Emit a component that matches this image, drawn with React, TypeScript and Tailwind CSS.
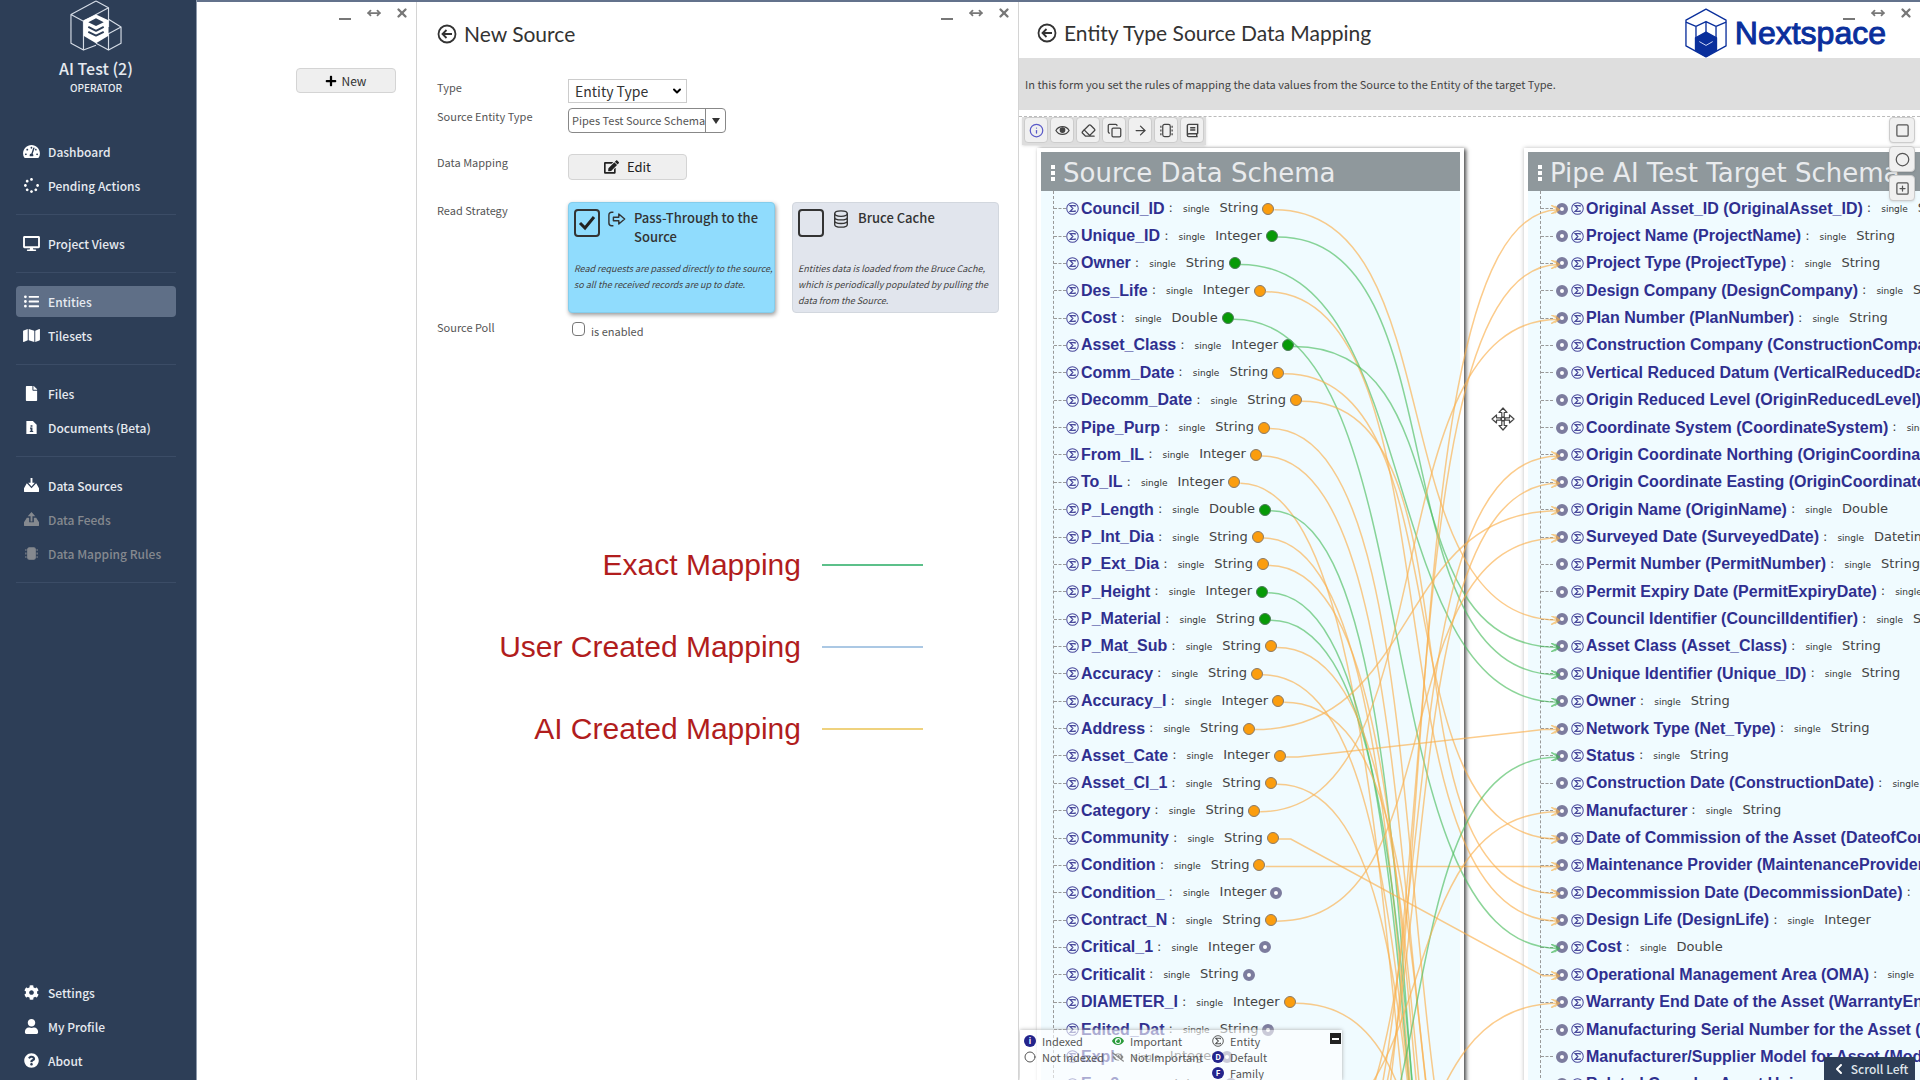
import React, { useLayoutEffect, useRef, useState } from 'react';
import { clsx } from 'clsx';
import {
  FaCog,
  FaDesktop,
  FaEdit,
  FaEye,
  FaEyeSlash,
  FaFile,
  FaListUl,
  FaMap,
  FaPlus,
  FaQuestionCircle,
  FaSpinner,
  FaTachometerAlt,
  FaUser,
} from 'react-icons/fa';
import {
  ArrowRight,
  ChevronDown,
  ChevronLeft,
  Circle,
  Copy,
  Eraser,
  Info,
  MoveHorizontal,
  Square,
  SquarePlus,
  X,
} from 'lucide-react';

type IconProps = { className?: string };

const FileInfoIcon = ({ className }: IconProps) => (
  <svg viewBox="0 0 16 16" className={className} fill="currentColor">
    <path d="M2.5 1h7l4 4v10h-11z" />
    <path d="M7 5.5h2v1.6H7zM6.4 8h2.6v3.6h.8v1.2H6.2v-1.2H7V9.2h-.6z" className="fill-[#2d3e57]" />
  </svg>
);

const TrayDownIcon = ({ className }: IconProps) => (
  <svg viewBox="0 0 16 16" className={className} fill="currentColor">
    <path d="M7 0h2v5h2.5L8 9 4.500 5H7z" />
    <path d="M3 5.500 8 11l5-5.500 3 5.500v3a1 1 0 0 1-1 1H1a1 1 0 0 1-1-1v-3z" />
  </svg>
);

const TrayUpIcon = ({ className }: IconProps) => (
  <svg viewBox="0 0 16 16" className={className} fill="currentColor">
    <path d="M8 0l4 4.500H9V10H7V4.500H4z" />
    <path d="M3 6h2.500v5h5V6H13l3 5v3a1 1 0 0 1-1 1H1a1 1 0 0 1-1-1v-3z" />
  </svg>
);

const RulesIcon = ({ className }: IconProps) => (
  <svg viewBox="0 0 16 16" className={className} fill="currentColor" stroke="currentColor" strokeWidth="1.2">
    <rect x="4" y="2" width="8" height="12" rx="1.5" />
    <path d="M2 3.500V5M2 7v2M2 11v1.500M14 3.500V5M14 7v2M14 11v1.500" />
  </svg>
);

const RulesOutlineIcon = ({ className }: IconProps) => (
  <svg viewBox="0 0 16 16" className={className} fill="none" stroke="currentColor" strokeWidth="1.3">
    <rect x="4" y="1.5" width="8" height="13" rx="2" />
    <path d="M2 3v2M2 7v2M2 11v2M14 3v2M14 7v2M14 11v2" />
  </svg>
);

const EyeIcon = ({ className }: IconProps) => (
  <svg viewBox="0 0 16 16" className={className} fill="none" stroke="currentColor" strokeWidth="1.3">
    <path d="M1 8c3-5.500 11-5.500 14 0-3 5.500-11 5.500-14 0z" />
    <circle cx="8" cy="7.500" r="2.400" fill="currentColor" />
  </svg>
);

const BookIcon = ({ className }: IconProps) => (
  <svg viewBox="0 0 16 16" className={className} fill="none" stroke="currentColor" strokeWidth="1.5">
    <path d="M13.500 11.500V1.500H4a1.500 1.500 0 0 0-1.500 1.500v10A1.500 1.500 0 0 0 4 14.500h9.500M13.500 11.500H4A1.500 1.500 0 0 0 2.500 13M12.500 11.500v3M5.500 5h5.500M5.500 7.500h5.500" />
  </svg>
);

const CylinderIcon = ({ className }: IconProps) => (
  <svg viewBox="0 0 16 20" className={className} fill="none" stroke="currentColor" strokeWidth="1.5">
    <ellipse cx="8" cy="4" rx="7" ry="3" />
    <path d="M1 4v12c0 4 14 4 14 0V4M1 8c0 4 14 4 14 0M1 12c0 4 14 4 14 0" />
  </svg>
);

const BackIcon = ({ className }: IconProps) => (
  <svg viewBox="0 0 20 20" className={className} fill="none" stroke="currentColor" strokeWidth="1.8">
    <circle cx="10" cy="10" r="8.500" />
    <path d="M15 10H6M9.500 6 5.500 10l4 4" />
  </svg>
);

const PassIcon = ({ className }: IconProps) => (
  <svg viewBox="0 0 20 18" className={className} fill="none" stroke="currentColor" strokeWidth="1.6" strokeLinejoin="round">
    <path d="M6 1.500H4a3 3 0 0 0-3 3v9a3 3 0 0 0 3 3h2" />
    <path d="M12 3.500 18.500 9 12 14.500V11H6V7h6z" />
  </svg>
);

const SigmaIcon = ({ className }: IconProps) => (
  <svg viewBox="0 0 14 14" className={className} fill="none" stroke="currentColor">
    <circle cx="7" cy="7" r="6.200" strokeWidth="1.100" />
    <path d="M9.800 5V3.800H4.400L7.400 7l-3 3.200h5.400V9" strokeWidth="1.300" />
  </svg>
);

const MoveCursor = ({ className }: IconProps) => (
  <svg viewBox="0 0 24 24" className={className} fill="#fff" stroke="#444" strokeWidth="1.200" strokeLinejoin="round">
    <path d="M12 1 8 5.500h2.800V10h2.400V5.500H16zM12 23l-4-4.500h2.800V14h2.400v4.500H16zM1 12l4.500-4v2.800H10v2.400H5.500V16zM23 12l-4.500-4v2.800H14v2.400h4.500V16z" />
    <rect x="10.500" y="10.500" width="3" height="3" />
  </svg>
);

const OperatorLogo = () => (
  <svg viewBox="0 0 54 54" className="h-[52px] w-[54px]" fill="none" stroke="#d5dce6" strokeWidth="1.200" strokeLinejoin="round">
    <path d="M27 1 1 15v30l13 7 13-5M27 1l13 7v20M14 52V22L1 15M14 22 40 8M40 20l13 8v17l-13 7-13-7M40 52V35l13-7M27 27l13 8" />
    <path d="M27 15l13 6v16l-13 8-13-8V21z" fill="#fff" stroke="none" />
    <path d="M27 19l8 4-8 4-8-4z" fill="#2d3e57" stroke="none" />
    <path d="m19 28 8 4 8-4M19 33l8 4 8-4" stroke="#2d3e57" strokeWidth="2" />
  </svg>
);

const NextspaceLogo = () => (
  <div className="flex items-center gap-2 text-[#0a2f9c]">
    <svg viewBox="0 0 44 52" className="h-[52px] w-[42px]" fill="none" stroke="currentColor" strokeWidth="1.400" strokeLinejoin="round">
      <path d="M22 1 43 12.500v27L22 51 1 39.500v-27z" />
      <path d="M1 14.500 11.500 19v13M11.500 19 22 14l10.500 5v13M32.500 19 43 14.500M22 14v12" />
      <path d="m22 25 11 6v13l-11 6.500L11 44V31z" fill="currentColor" />
      <path d="m15 35 7 4 7-4" stroke="#d7defa" strokeWidth="1" />
    </svg>
    <span className="font-['Liberation_Sans',sans-serif] text-[32px] leading-9 [-webkit-text-stroke:1px_#0a2f9c]">Nextspace</span>
  </div>
);

const menuGroups = [
  [
    { name: 'Dashboard', icon: FaTachometerAlt },
    { name: 'Pending Actions', icon: FaSpinner },
  ],
  [{ name: 'Project Views', icon: FaDesktop }],
  [
    { name: 'Entities', icon: FaListUl, active: true },
    { name: 'Tilesets', icon: FaMap },
  ],
  [
    { name: 'Files', icon: FaFile },
    { name: 'Documents (Beta)', icon: FileInfoIcon },
  ],
  [
    { name: 'Data Sources', icon: TrayDownIcon },
    { name: 'Data Feeds', icon: TrayUpIcon, disabled: true },
    { name: 'Data Mapping Rules', icon: RulesIcon, disabled: true },
  ],
];

const footerItems = [
  { name: 'Settings', icon: FaCog },
  { name: 'My Profile', icon: FaUser },
  { name: 'About', icon: FaQuestionCircle },
];

type MenuItem = {
  name: string;
  icon: React.ComponentType<IconProps>;
  active?: boolean;
  disabled?: boolean;
};

const MenuLink = ({ item }: { item: MenuItem }) => (
  <a
    href="#"
    className={clsx(
      'flex h-[31px] items-center gap-2 rounded px-[7px] text-[12px] font-medium',
      item.active && 'bg-[#5f6f87]',
      item.disabled ? 'text-[#85898f]' : 'text-[#e6eaf0]'
    )}
  >
    <item.icon className={clsx('h-[15px] w-[17px] shrink-0', !item.disabled && 'text-white')} />
    <span>{item.name}</span>
  </a>
);

const Sidebar = () => (
  <aside className="flex w-[197px] shrink-0 flex-col border-r border-[#8d99ab] bg-[#2d3e57] pr-5 pb-1 pl-4">
    <div className="flex flex-col items-center text-[#e6eaf0]">
      <OperatorLogo />
      <span className="mt-1 text-base leading-6 font-medium">AI Test (2)</span>
      <span className="text-[10px] leading-4 font-medium">OPERATOR</span>
    </div>
    <nav className="mt-[40px]">
      {menuGroups.map((group) => (
        <div key={group[0].name} className="mb-[13px] flex flex-col gap-[3px] border-b border-[#3b4c66] pb-[13px]">
          {group.map((item) => (
            <MenuLink key={item.name} item={item} />
          ))}
        </div>
      ))}
    </nav>
    <nav className="mt-auto flex flex-col gap-[3px]">
      {footerItems.map((item) => (
        <MenuLink key={item.name} item={item} />
      ))}
    </nav>
  </aside>
);

const WindowControls = () => (
  <div className="absolute top-1 right-[7px] flex gap-[14px] text-[#777]">
    <button aria-label="Minimise" className="flex h-[14px] w-[14px] items-end">
      <span className="h-[2px] w-3 bg-current" />
    </button>
    <button aria-label="Resize">
      <MoveHorizontal className="h-[14px] w-[14px]" strokeWidth={3} />
    </button>
    <button aria-label="Close">
      <X className="h-[14px] w-[14px]" strokeWidth={4} />
    </button>
  </div>
);

const PanelTitle = ({ children }: { children: React.ReactNode }) => (
  <div className="flex items-center gap-[7px] text-[#333]">
    <button aria-label="Back">
      <BackIcon className="h-5 w-5" />
    </button>
    <h1 className="font-['Lato',sans-serif] text-[21px] leading-7">{children}</h1>
  </div>
);

const strategies = [
  {
    name: 'Pass-Through to the Source',
    icon: PassIcon,
    text: 'Read requests are passed directly to the source,\nso all the received records are up to date.',
    checked: true,
  },
  {
    name: 'Bruce Cache',
    icon: CylinderIcon,
    text: 'Entities data is loaded from the Bruce Cache,\nwhich is periodically populated by pulling the\ndata from the Source.',
    checked: false,
  },
];

const StrategyCard = ({ strategy }: { strategy: (typeof strategies)[number] }) => {
  const [checked, setChecked] = useState(strategy.checked);
  return (
    <label
      className={clsx(
        'flex h-[111px] w-[207px] flex-col justify-between rounded border pt-[5px] pb-[3px] pl-[5px]',
        checked ? 'border-[#84cdec] bg-[#90dcfd] shadow-[1px_2px_4px_#999]' : 'border-[#d2d7de] bg-[#e1e5ed]'
      )}
    >
      <span className="flex items-start gap-2 pr-1 text-[#333]">
        <span className="relative mt-px h-7 w-[26px] shrink-0">
          <input
            type="checkbox"
            checked={checked}
            onChange={(e) => setChecked(e.target.checked)}
            className="h-7 w-[26px] appearance-none rounded-sm border-2 border-[#333]"
          />
          {checked && (
            <svg viewBox="0 0 26 28" className="pointer-events-none absolute inset-0" fill="none" stroke="#222" strokeWidth="3">
              <path d="m6 14 5 5 9-11" />
            </svg>
          )}
        </span>
        <strategy.icon className="mt-[2px] h-[18px] w-[18px] shrink-0" />
        <span className="text-[13px] leading-[19px] font-medium">{strategy.name}</span>
      </span>
      <span className="h-12 text-[9px] leading-4 whitespace-pre text-[#444] italic">{strategy.text}</span>
    </label>
  );
};

const mappingKinds = [
  { name: 'Exact Mapping', line: 'bg-[#5cc08a]' },
  { name: 'User Created Mapping', line: 'bg-[#abc8e4]' },
  { name: 'AI Created Mapping', line: 'bg-[#efd27e]' },
];

const NewSourcePanel = () => (
  <section className="relative w-[602px] shrink-0 border-r border-[#d4d4d4] px-5 pt-[18px]">
    <WindowControls />
    <PanelTitle>New Source</PanelTitle>
    <form className="mt-[31px] grid grid-cols-[131px_1fr] text-[11px] text-[#555]">
      <label htmlFor="type" className="leading-4">Type</label>
      <div className="relative h-[29px] w-[119px]">
        <select id="type" className="h-6 w-full appearance-none border border-[#ccc] pl-[6px] text-sm leading-5 text-[#333]">
          <option>Entity Type</option>
        </select>
        <ChevronDown className="pointer-events-none absolute top-[6px] right-1 h-3 w-3 text-black" strokeWidth={4} />
      </div>
      <label htmlFor="entity-type" className="leading-4">Source Entity Type</label>
      <div className="mb-[21px] flex h-[25px] w-[158px] rounded-sm border border-[#888]">
        <input id="entity-type" defaultValue="Pipes Test Source Schema" className="w-full min-w-0 pl-[3px]" />
        <button type="button" aria-label="Open list" className="flex w-5 shrink-0 items-center justify-center border-l border-[#888]">
          <svg viewBox="0 0 8 6" className="h-[6px] w-2" fill="#333">
            <path d="M0 0h8L4 6z" />
          </svg>
        </button>
      </div>
      <span className="leading-4">Data Mapping</span>
      <button type="button" className="mb-[22px] flex h-[26px] w-[119px] items-center justify-center gap-2 rounded border border-[#d4d4d4] bg-[#efefef] text-[13px] text-[#222]">
        <FaEdit className="h-[14px] w-[15px]" />
        Edit
      </button>
      <span className="leading-4">Read Strategy</span>
      <div className="mb-[6px] flex gap-[17px]">
        {strategies.map((strategy) => (
          <StrategyCard key={strategy.name} strategy={strategy} />
        ))}
      </div>
      <span className="leading-4">Source Poll</span>
      <label className="flex items-center gap-[6px] pl-[4px]">
        <input type="checkbox" className="h-[14px] w-[13px] appearance-none rounded-sm border border-[#777]" />
        <span className="pt-1 leading-4">is enabled</span>
      </label>
    </form>
    <ul className="mt-[208px] flex flex-col gap-[46px] pr-[75px] font-['Liberation_Sans',sans-serif] text-[30px] leading-9 text-[#b11d1d]">
      {mappingKinds.map((kind) => (
        <li key={kind.name} className="flex items-center justify-end gap-[21px]">
          {kind.name}
          <span className={clsx('h-[2px] w-[101px]', kind.line)} />
        </li>
      ))}
    </ul>
  </section>
);

type Field = [name: string, type: string, color?: 'orange' | 'green'];

const sourceFields: Field[] = [
  ['Council_ID', 'String', 'orange'],
  ['Unique_ID', 'Integer', 'green'],
  ['Owner', 'String', 'green'],
  ['Des_Life', 'Integer', 'orange'],
  ['Cost', 'Double', 'green'],
  ['Asset_Class', 'Integer', 'green'],
  ['Comm_Date', 'String', 'orange'],
  ['Decomm_Date', 'String', 'orange'],
  ['Pipe_Purp', 'String', 'orange'],
  ['From_IL', 'Integer', 'orange'],
  ['To_IL', 'Integer', 'orange'],
  ['P_Length', 'Double', 'green'],
  ['P_Int_Dia', 'String', 'orange'],
  ['P_Ext_Dia', 'String', 'orange'],
  ['P_Height', 'Integer', 'green'],
  ['P_Material', 'String', 'green'],
  ['P_Mat_Sub', 'String', 'orange'],
  ['Accuracy', 'String', 'orange'],
  ['Accuracy_I', 'Integer', 'orange'],
  ['Address', 'String', 'orange'],
  ['Asset_Cate', 'Integer', 'orange'],
  ['Asset_CI_1', 'String', 'orange'],
  ['Category', 'String', 'orange'],
  ['Community', 'String', 'orange'],
  ['Condition', 'String', 'orange'],
  ['Condition_', 'Integer'],
  ['Contract_N', 'String', 'orange'],
  ['Critical_1', 'Integer'],
  ['Criticalit', 'String'],
  ['DIAMETER_I', 'Integer', 'orange'],
  ['Edited_Dat', 'String'],
  ['Expl', 'Integer'],
  ['Exp2', 'Integer'],
];

const targetFields: Field[] = [
  ['Original Asset_ID (OriginalAsset_ID)', 'String'],
  ['Project Name (ProjectName)', 'String'],
  ['Project Type (ProjectType)', 'String'],
  ['Design Company (DesignCompany)', 'String'],
  ['Plan Number (PlanNumber)', 'String'],
  ['Construction Company (ConstructionCompany)', 'String'],
  ['Vertical Reduced Datum (VerticalReducedDatum)', 'String'],
  ['Origin Reduced Level (OriginReducedLevel)', 'Double'],
  ['Coordinate System (CoordinateSystem)', 'String'],
  ['Origin Coordinate Northing (OriginCoordinateNorthing)', 'Double'],
  ['Origin Coordinate Easting (OriginCoordinateEasting)', 'Double'],
  ['Origin Name (OriginName)', 'Double'],
  ['Surveyed Date (SurveyedDate)', 'Datetime'],
  ['Permit Number (PermitNumber)', 'String'],
  ['Permit Expiry Date (PermitExpiryDate)', 'Datetime'],
  ['Council Identifier (CouncilIdentifier)', 'String'],
  ['Asset Class (Asset_Class)', 'String'],
  ['Unique Identifier (Unique_ID)', 'String'],
  ['Owner', 'String'],
  ['Network Type (Net_Type)', 'String'],
  ['Status', 'String'],
  ['Construction Date (ConstructionDate)', 'Datetime'],
  ['Manufacturer', 'String'],
  ['Date of Commission of the Asset (DateofCommission)', 'Datetime'],
  ['Maintenance Provider (MaintenanceProvider)', 'String'],
  ['Decommission Date (DecommissionDate)', 'Datetime'],
  ['Design Life (DesignLife)', 'Integer'],
  ['Cost', 'Double'],
  ['Operational Management Area (OMA)', 'String'],
  ['Warranty End Date of the Asset (WarrantyEndDate)', 'Datetime'],
  ['Manufacturing Serial Number for the Asset (ManufacturingSerial)', 'String'],
  ['Manufacturer/Supplier Model for Asset (ModelforAsset)', 'String'],
  ['Related Complex Asset Unique Identifier', 'String'],
];

// [source row, target row, color], rows past the end of a list sit below the fold
const links: [number, number, 'orange' | 'green'][] = [
  [0, 15, 'orange'],
  [1, 17, 'green'],
  [2, 18, 'green'],
  [3, 26, 'orange'],
  [4, 27, 'green'],
  [5, 16, 'green'],
  [6, 23, 'orange'],
  [7, 25, 'orange'],
  [8, 42, 'orange'],
  [9, 44, 'orange'],
  [10, 52, 'orange'],
  [11, 56, 'green'],
  [12, 53, 'orange'],
  [13, 49, 'orange'],
  [14, 54, 'green'],
  [15, 51, 'green'],
  [16, 47, 'orange'],
  [17, 48, 'orange'],
  [18, 43, 'orange'],
  [19, 11, 'orange'],
  [20, 19, 'orange'],
  [21, 50, 'orange'],
  [22, 4, 'orange'],
  [23, 28, 'orange'],
  [24, 24, 'orange'],
  [26, 12, 'orange'],
  [29, 43, 'orange'],
  [42, 0, 'orange'],
  [39, 2, 'orange'],
  [36, 9, 'orange'],
  [38, 10, 'orange'],
  [38, 20, 'green'],
  [34, 22, 'orange'],
  [40, 29, 'orange'],
  [36, 32, 'orange'],
];

const buildWire = (x0: number, y0: number, x1: number, y1: number) => {
  const dy = Math.abs(y1 - y0);
  if (dy < 150) return `M${x0} ${y0}H${x0 + 12}L${x1 - 16} ${y1}H${x1}`;
  const bend = Math.min(150 + dy * 0.08, 202);
  return `M${x0} ${y0}C${x0 + bend} ${y0} ${x1 - bend} ${y1} ${x1} ${y1}`;
};

const Port = ({ color, portRef }: { color?: string; portRef: (el: HTMLElement | null) => void }) => (
  <span
    ref={portRef}
    className={clsx(
      'h-3 w-3 shrink-0 rounded-full',
      color === 'orange' && 'border border-[#8a7a68] bg-[#fb9d0e]',
      color === 'green' && 'border border-[#4d7a58] bg-[#079a07]',
      !color && 'border-4 border-[#7c7c9e] bg-white'
    )}
  />
);

type SchemaProps = {
  title: string;
  fields: Field[];
  side: 'source' | 'target';
  ports: React.RefObject<(HTMLElement | null)[]>;
};

const SchemaCard = ({ title, fields, side, ports }: SchemaProps) => (
  <article
    className={clsx(
      'shrink-0 border-4 border-white bg-[#f0fbff]',
      side === 'source' ? 'w-[427px] shadow-[2px_1px_4px_#444]' : 'w-[640px] shadow-[0_0_4px_#bbb]'
    )}
  >
    <header className="flex h-[39px] items-center gap-2 bg-[#8f989c] pt-[2px] pl-[10px] text-[#e9ebed]">
      <span className="flex w-1 flex-col gap-[2px]">
        <span className="h-1 w-1 bg-white" />
        <span className="h-1 w-1 bg-white" />
        <span className="h-1 w-1 bg-white" />
      </span>
      <h2 className="font-['DejaVu_Sans',sans-serif] text-[26px] leading-8 whitespace-nowrap">{title}</h2>
    </header>
    <ul className="ml-3 grid h-[907px] auto-rows-fr border-l border-dashed border-[#999] pt-1">
      {fields.map(([name, type, color], i) => (
        <li key={name} className="flex items-center whitespace-nowrap">
          <span className={clsx('w-3 border-t border-dashed border-[#999]', side === 'target' && 'mr-[3px]')} />
          {side === 'target' && <Port portRef={(el) => { ports.current[i] = el; }} />}
          <SigmaIcon className={clsx('mr-[2px] h-[13px] w-[13px] text-[#4a4a9c]', side === 'target' && 'ml-[3px]')} />
          <span className="font-['Liberation_Sans',sans-serif] text-base leading-5 font-bold text-[#2f2f8f]">{name}</span>
          <span className="font-['DejaVu_Sans',sans-serif] text-[13px] leading-5 text-[#444]">
            <span className="ml-1">:</span>
            <span className="mx-[10px] text-[9px] text-[#333]">single</span>
            {type}
          </span>
          {side === 'source' && (
            <span className="ml-1 flex">
              <Port color={color} portRef={(el) => { ports.current[i] = el; }} />
            </span>
          )}
        </li>
      ))}
    </ul>
  </article>
);

const tools = [
  { name: 'Info', icon: Info, className: 'text-[#5a5ac8]' },
  { name: 'Show', icon: EyeIcon },
  { name: 'Erase', icon: Eraser },
  { name: 'Copy', icon: Copy },
  { name: 'Link', icon: ArrowRight },
  { name: 'Rules', icon: RulesOutlineIcon },
  { name: 'Log', icon: BookIcon },
];

const shapes = [
  { name: 'Square', icon: Square },
  { name: 'Circle', icon: Circle },
  { name: 'Expand', icon: SquarePlus },
];

const Badge = ({ children }: { children: React.ReactNode }) => (
  <span className="flex h-3 w-3 items-center justify-center rounded-full bg-[#24248c] text-[8px] leading-none font-bold text-white">
    {children}
  </span>
);

const legend = [
  [
    { name: 'Indexed', icon: <Badge>i</Badge> },
    { name: 'Not Indexed', icon: <Circle className="h-3 w-3 text-[#555]" /> },
  ],
  [
    { name: 'Important', icon: <FaEye className="h-3 w-3 text-[#2c9c3c]" /> },
    { name: 'Not Important', icon: <FaEyeSlash className="h-3 w-3 text-[#888]" /> },
  ],
  [
    { name: 'Entity', icon: <SigmaIcon className="h-3 w-3 text-[#555]" /> },
    { name: 'Default', icon: <Badge>D</Badge> },
    { name: 'Family', icon: <Badge>F</Badge> },
  ],
];

const MappingCanvas = () => {
  const canvasRef = useRef<HTMLDivElement>(null);
  const sourcePorts = useRef<(HTMLElement | null)[]>([]);
  const targetPorts = useRef<(HTMLElement | null)[]>([]);
  const [wires, setWires] = useState<{ d: string; color: string }[]>([]);

  useLayoutEffect(() => {
    const measure = () => {
      if (!canvasRef.current) return;
      const base = canvasRef.current.getBoundingClientRect();
      const locate = (ports: (HTMLElement | null)[], row: number, side: 'left' | 'right') => {
        const first = ports[0]!.getBoundingClientRect();
        const rect = ports[row]?.getBoundingClientRect() ?? first;
        const pitch = ports[1]!.getBoundingClientRect().top - first.top;
        const y = ports[row] ? rect.top : first.top + pitch * row;
        return { x: rect[side] - base.left, y: y + rect.height / 2 - base.top };
      };
      setWires(
        links.map(([from, to, color]) => {
          const a = locate(sourcePorts.current, from, 'right');
          const b = locate(targetPorts.current, to, 'left');
          return { d: buildWire(a.x, a.y, b.x + 3, b.y), color };
        })
      );
    };
    measure();
    document.fonts.ready.then(measure);
    window.addEventListener('resize', measure);
    return () => window.removeEventListener('resize', measure);
  }, []);

  return (
    <div ref={canvasRef} className="relative mt-[6px] min-h-0 flex-1 overflow-hidden border-t border-dashed border-[#bbb] pt-[31px] pl-[18px]">
      <div className="flex items-start gap-[60px]">
        <SchemaCard title="Source Data Schema" fields={sourceFields} side="source" ports={sourcePorts} />
        <SchemaCard title="Pipe AI Test Target Schema" fields={targetFields} side="target" ports={targetPorts} />
      </div>

      <svg className="pointer-events-none absolute inset-0 h-full w-full" fill="none" strokeWidth="1.500">
        <defs>
          <marker id="tip-orange" viewBox="0 0 8 8" refX="7" refY="4" markerWidth="6" markerHeight="6" orient="auto">
            <path d="M0 0l7 4-7 4M3 1l4 3-4 3" fill="none" stroke="#f9b24a" />
          </marker>
          <marker id="tip-green" viewBox="0 0 8 8" refX="7" refY="4" markerWidth="6" markerHeight="6" orient="auto">
            <path d="M0 0l7 4-7 4M3 1l4 3-4 3" fill="none" stroke="#3bb34e" />
          </marker>
        </defs>
        {wires.map((wire) => (
          <path
            key={wire.d}
            d={wire.d}
            opacity="0.65"
            stroke={wire.color === 'green' ? '#4fbf62' : '#fbb14e'}
            markerEnd={wire.color === 'green' ? 'url(#tip-green)' : 'url(#tip-orange)'}
          />
        ))}
      </svg>

      <div className="absolute top-0 left-[3px] flex gap-[2px] bg-[#ddd] px-[2px] pb-[2px] shadow">
        {tools.map((tool) => (
          <button
            key={tool.name}
            aria-label={tool.name}
            className={clsx('flex h-[26px] w-6 items-center justify-center rounded-sm border border-[#ccc] bg-[#f0f0f0]', tool.className ?? 'text-[#444]')}
          >
            <tool.icon className="h-[15px] w-[15px]" />
          </button>
        ))}
      </div>

      <div className="absolute top-0 right-[5px] flex flex-col gap-[3px]">
        {shapes.map((shape) => (
          <button key={shape.name} aria-label={shape.name} className="flex h-[26px] w-[26px] items-center justify-center rounded-sm border border-[#ccc] bg-[#f0f0f0] text-[#555] shadow">
            <shape.icon className="h-[15px] w-[15px]" />
          </button>
        ))}
      </div>

      <MoveCursor className="absolute top-[290px] left-[472px] h-6 w-6" />

      <div className="absolute bottom-0 left-px flex h-[50px] w-[322px] bg-white/60 pt-[3px] pl-1 text-[11px] leading-4 text-[#555] shadow-[0_0_4px_#aaa]">
        {legend.map((column, i) => (
          <ul key={column[0].name} className={i === 2 ? 'w-24' : i === 1 ? 'w-[100px]' : 'w-[88px]'}>
            {column.map((entry) => (
              <li key={entry.name} className="flex items-center gap-[6px] whitespace-nowrap">
                {entry.icon}
                {entry.name}
              </li>
            ))}
          </ul>
        ))}
        <button aria-label="Collapse legend" className="absolute top-[3px] right-px flex h-[11px] w-[11px] items-center justify-center bg-[#222]">
          <span className="h-[2px] w-[7px] bg-white" />
        </button>
      </div>

      <button className="absolute right-[5px] bottom-0 flex h-[23px] w-[91px] items-center justify-center gap-1 bg-[#2d3e57] text-[12px] font-medium text-[#dfe4ea]">
        <ChevronLeft className="h-4 w-4 text-white" strokeWidth={3} />
        Scroll Left
      </button>
    </div>
  );
};

const MappingPanel = () => (
  <section className="relative flex min-w-0 flex-1 flex-col">
    <header className="flex h-14 shrink-0 items-center justify-between pt-[6px] pr-[34px] pl-[18px]">
      <PanelTitle>Entity Type Source Data Mapping</PanelTitle>
      <NextspaceLogo />
    </header>
    <WindowControls />
    <p className="flex h-[52px] shrink-0 items-center bg-[#dedede] pl-[6px] text-[11px] text-[#444]">
      In this form you set the rules of mapping the data values from the Source to the Entity of the target Type.
    </p>
    <MappingCanvas />
  </section>
);

export default function App() {
  return (
    <div className="flex h-screen overflow-hidden bg-white font-['Noto_Sans_CJK_SC','Noto_Sans',sans-serif]">
      <Sidebar />
      <main className="flex min-w-0 flex-1 border-t-2 border-[#63728c]">
        <section className="relative w-[220px] shrink-0 border-r border-[#d4d4d4] pt-[66px] pr-5">
          <WindowControls />
          <button className="ml-auto flex h-[25px] w-[100px] items-center justify-center gap-1 rounded border border-[#d4d4d4] bg-[#efefef] text-[12px] text-[#333]">
            <FaPlus className="h-3 w-3 text-black" />
            New
          </button>
        </section>
        <NewSourcePanel />
        <MappingPanel />
      </main>
    </div>
  );
}
